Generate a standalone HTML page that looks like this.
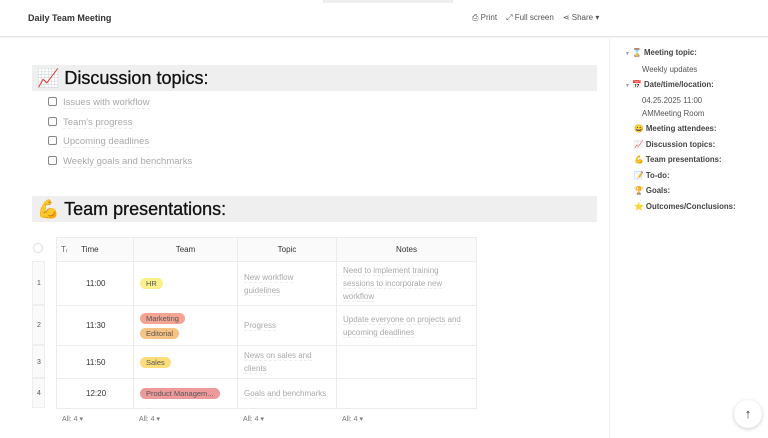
<!DOCTYPE html><html><head><meta charset="utf-8"><style>
*{box-sizing:border-box;margin:0;padding:0}
body{width:768px;height:438px;overflow:hidden;background:#fff;font-family:"Liberation Sans","Noto Sans CJK SC",sans-serif;color:#333;position:relative}
.hdr{position:absolute;left:0;top:0;width:768px;height:37px;border-bottom:1px solid #e2e2e2;box-shadow:0 1px 2px rgba(0,0,0,.05)}
.bar{position:absolute;left:323px;top:0;width:130px;height:3px;background:#eee}
.title{position:absolute;left:28px;top:13px;font-size:9px;font-weight:bold;color:#333}
.acts{position:absolute;left:472px;top:13px;font-size:8px;color:#555}
.acts span{margin-right:9px}
.side{position:absolute;left:609px;top:38px;width:159px;height:400px;border-left:1px solid #eee;font-size:7.8px;font-weight:bold;color:#444}
.side div{position:absolute;white-space:nowrap}
.side .n{font-weight:normal;color:#555}
.h{position:absolute;left:32px;width:565px;height:26px;background:#efefef;font-size:18px;color:#111;padding-left:5px;line-height:26px;-webkit-text-stroke:0.3px #111}
.cb{position:absolute;left:48px;font-size:9.5px;color:#aaa}
.cb i{display:inline-block;width:9px;height:9px;border:1.2px solid #888;border-radius:2px;margin-right:6px;vertical-align:-1px}
.cb u{text-decoration:none;border-bottom:1px dashed #ececec}
table{position:absolute;left:56px;top:237px;border-collapse:collapse;font-size:8px}
td,th{border:1px solid #ececec;vertical-align:middle}
th{height:24px;font-weight:normal;color:#333;background:#fafafa}
.g{color:#aaa;line-height:13px;padding:0 6px}
.g span{border-bottom:1px dashed #eee}
.tag{display:inline-block;border-radius:7px;padding:1px 6px;font-size:7.5px;color:#555;margin:2px 0}
.rn{position:absolute;left:32px;width:13px;font-size:7px;color:#555;background:#fafafa;border:1px solid #eee;padding-left:4px}
.ft{position:absolute;top:415px;font-size:7px;color:#777}
</style></head><body>
<div class="hdr"><div class="bar"></div><div class="title">Daily Team Meeting</div>
<div class="acts"><span>⎙ Print</span><span>⤢ Full screen</span><span>⋖ Share ▾</span></div></div>
<div class="side">
<div style="left:15px;top:10px"><span style="color:#999;font-size:5px">▼</span> ⌛ Meeting topic:</div>
<div class="n" style="left:32px;top:27px">Weekly updates</div>
<div style="left:15px;top:42px"><span style="color:#999;font-size:5px">▼</span> 📅 Date/time/location:</div>
<div class="n" style="left:32px;top:58px">04.25.2025 11:00</div>
<div class="n" style="left:32px;top:71px">AMMeeting Room</div>
<div style="left:24px;top:86px">😀 Meeting attendees:</div>
<div style="left:24px;top:102px">📈 Discussion topics:</div>
<div style="left:24px;top:117px">💪 Team presentations:</div>
<div style="left:24px;top:133px">📝 To-do:</div>
<div style="left:24px;top:148px">🏆 Goals:</div>
<div style="left:24px;top:164px">⭐ Outcomes/Conclusions:</div>
</div>
<div class="h" style="top:65px">📈 Discussion topics:</div>
<div class="cb" style="top:97px"><i></i><u>Issues with workflow</u></div>
<div class="cb" style="top:117px"><i></i><u>Team's progress</u></div>
<div class="cb" style="top:136px"><i></i><u>Upcoming deadlines</u></div>
<div class="cb" style="top:156px"><i></i><u>Weekly goals and benchmarks</u></div>
<div class="h" style="top:196px">💪 Team presentations:</div>
<div style="position:absolute;left:33px;top:243px;width:10px;height:10px;border:1px solid #ddd;border-radius:50%"></div>
<div class="rn" style="top:261px;height:44px;line-height:44px">1</div>
<div class="rn" style="top:305px;height:40px;line-height:40px">2</div>
<div class="rn" style="top:345px;height:33px;line-height:33px">3</div>
<div class="rn" style="top:378px;height:30px;line-height:30px">4</div>
<table>
<tr><th style="width:77px;text-align:left;padding-left:4px"><span style="color:#666">Tᵣ</span>&nbsp;&nbsp;&nbsp;&nbsp;&nbsp;&nbsp;Time</th><th style="width:104px">Team</th><th style="width:99px">Topic</th><th style="width:140px">Notes</th></tr>
<tr style="height:44px"><td style="padding-left:29px">11:00</td><td style="padding-left:6px"><span class="tag" style="background:#fbf08a">HR</span></td><td class="g"><span>New workflow</span><br><span>guidelines</span></td><td class="g"><span>Need to implement training</span><br><span>sessions to incorporate new</span><br><span>workflow</span></td></tr>
<tr style="height:40px"><td style="padding-left:29px">11:30</td><td style="padding-left:6px"><span class="tag" style="background:#f5a493">Marketing</span><br><span class="tag" style="background:#f8c283">Editorial</span></td><td class="g"><span>Progress</span></td><td class="g"><span>Update everyone on projects and</span><br><span>upcoming deadlines</span></td></tr>
<tr style="height:33px"><td style="padding-left:29px">11:50</td><td style="padding-left:6px"><span class="tag" style="background:#fbdd7a">Sales</span></td><td class="g"><span>News on sales and</span><br><span>clients</span></td><td></td></tr>
<tr style="height:30px"><td style="padding-left:29px">12:20</td><td style="padding-left:6px"><span class="tag" style="background:#ee9a9a">Product Managem...</span></td><td class="g"><span>Goals and benchmarks</span></td><td></td></tr>
</table>
<div class="ft" style="left:62px">All: 4 ▾</div>
<div class="ft" style="left:139px">All: 4 ▾</div>
<div class="ft" style="left:243px">All: 4 ▾</div>
<div class="ft" style="left:342px">All: 4 ▾</div>
<div style="position:absolute;left:734px;top:400px;width:28px;height:28px;border-radius:50%;background:#fff;box-shadow:0 1px 4px rgba(0,0,0,.2);text-align:center;line-height:28px;font-size:13px;color:#333">↑</div>
</body></html>
